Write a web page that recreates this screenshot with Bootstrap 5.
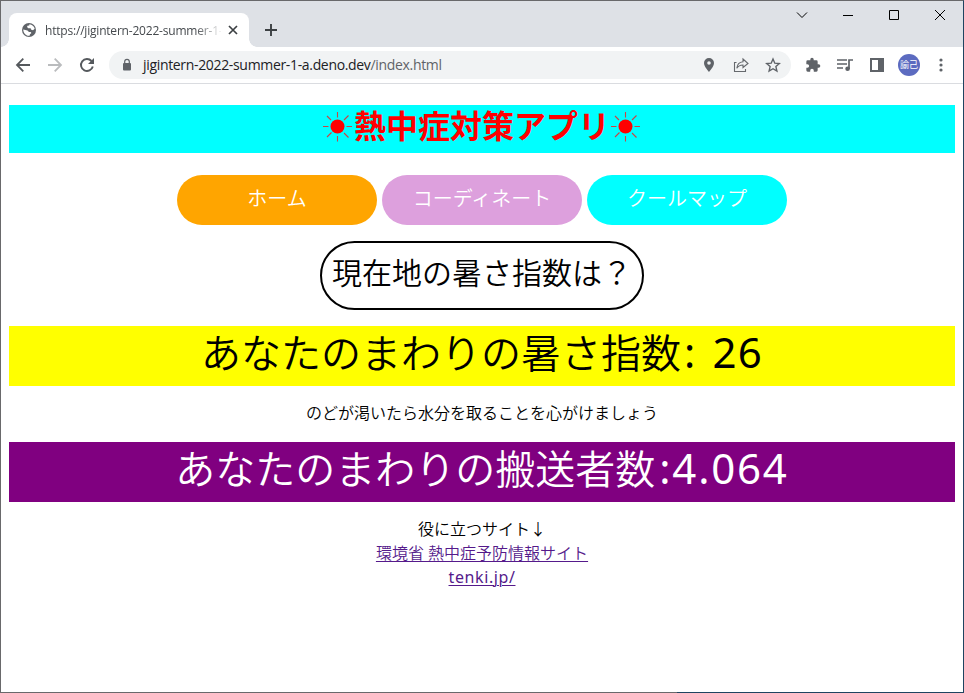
<!DOCTYPE html>
<html lang="ja">
<head>
<meta charset="utf-8">
<meta name="viewport" content="width=device-width, initial-scale=1">
<title>熱中症対策アプリ</title>
<link href="https://cdn.jsdelivr.net/npm/bootstrap@5.3.0/dist/css/bootstrap.min.css" rel="stylesheet">
<style>
body{font-family:"Noto Sans","Noto Sans CJK JP",sans-serif;color:#000;background:#fff;line-height:1.5}
.window-frame{width:964px;height:693px;border:1px solid #69696b;border-right-color:#1f4460;border-bottom:0}
.window-edge{height:1px;background:linear-gradient(to right,#69696b 676px,#1f4460 676px)}
.titlebar{height:46px;background:#dee1e6}
.browser-tab{width:240px;height:34px;margin:12px 0 0 8px;background:#fff;border-radius:8px 8px 0 0;padding-left:12px;font:12px/34px "Open Sans",sans-serif;color:#45494d;position:relative}
.browser-tab::before,.browser-tab::after{content:"";position:absolute;bottom:0;width:8px;height:8px}
.browser-tab::before{left:-8px;background:radial-gradient(circle at 0 0,transparent 7.5px,#fff 8px)}
.browser-tab::after{right:-8px;background:radial-gradient(circle at 100% 0,transparent 7.5px,#fff 8px)}
.tab-title{width:176px;margin-left:8px;padding-top:1px;letter-spacing:-.2px;-webkit-mask-image:linear-gradient(to right,#000 150px,transparent 178px);mask-image:linear-gradient(to right,#000 150px,transparent 178px)}
.new-tab{width:16px;margin:21px 0 0 14px}
.win-btn{width:46px;height:28px}
.toolbar{height:37px;padding:0 6px;border-bottom:1px solid #dadce0}
.tool{width:32px;height:28px}
.address{height:28px;margin:0 6px;background:#f1f3f4;border-radius:14px;font:14px/28px "Open Sans",sans-serif;color:#202124;padding:0 2px}
.address .url{letter-spacing:-.33px}
.url-path{color:#5f6368}
.avatar{width:22px;height:22px;border-radius:50%;background:#5c6bc0;color:#fff;font:9px/22px "Noto Sans CJK JP",sans-serif}
svg{display:block}
.site{padding:21px 8px 0;font-weight:350}
.app-title{height:48px;background:#0ff;color:red;font-size:32px;line-height:42px;font-weight:700;margin-bottom:22px}
.sun-icon{margin-top:6px}
.menu-row{gap:5px;margin-bottom:16px}
.menu-btn{width:200px;height:50px;border-radius:25px;color:#fff;font-size:20px;line-height:48px;padding:0 0 2px;border:0;font-weight:350}
.menu-btn:hover{color:#fff}
.c-home{background:orange}.c-coord{background:plum}.c-map{background:#0ff}
.question{height:69px;border:2px solid #000;border-radius:35px;font-size:30px;line-height:60px;padding:0 10px;margin-bottom:16px}
.banner{height:60px;font-size:40px;line-height:52px}
.b-index{background:#ff0;margin-bottom:15px}
.b-carry{background:purple;color:#fff;margin-bottom:15px}
.num{font-size:42px;font-weight:400;letter-spacing:1.2px;word-spacing:4px;margin-left:3px}
.b-carry .num{letter-spacing:1.8px;margin-left:4px}
.advice{height:24px;margin-bottom:17px}
.site a{color:#551a8b;text-underline-offset:2px;text-decoration-thickness:1px}
.latin{letter-spacing:.6px;font-weight:400}
</style>
<script src="https://cdn.jsdelivr.net/npm/bootstrap@5.3.0/dist/js/bootstrap.bundle.min.js"></script>
</head>
<body class="overflow-hidden">
<svg width="0" height="0" class="position-absolute"><defs>
<symbol id="sun" viewBox="0 0 32 32"><circle cx="15.500" cy="15.500" r="7" fill="red"/><path d="M15.500 1v5.500M15.500 25v5.500M1 15.500h5.500M24.500 15.500H30M5 5l4 4M22 22l4.500 4.500M26.500 4.500L22 9M9.500 21.500L5 26" stroke="#c44" stroke-width="1.100"/></symbol>
</defs></svg>
<div class="window-frame d-flex flex-column">
  <div class="titlebar d-flex align-items-start">
    <div class="browser-tab d-flex align-items-center">
      <svg width="16" height="16" viewBox="0 0 16 16"><circle cx="8" cy="8" r="7" fill="#5f6368"/><path d="M8.500 2.200c2.500.2 4.700 2 5.200 4.600l-1.700 1.400-1.700-.4-.7-1.600H7.200L6.100 5.100l.3-1.300 1.800-.2zM2.200 7.500l4.300 1.100 1.500 1.300 1.700.2.700 1-1.400 1.200-.5 1.500c-3.200.2-6-2.200-6.300-6.300z" fill="#fff"/></svg>
      <div class="tab-title text-nowrap">https://jigintern-2022-summer-1-</div>
      <svg class="ms-1" width="16" height="16" viewBox="0 0 16 16"><path d="M4 4l8 8M12 4l-8 8" stroke="#3c4043" stroke-width="1.700"/></svg>
    </div>
    <div class="new-tab"><svg width="16" height="16" viewBox="0 0 16 16"><path d="M8 2v12M2 8h12" stroke="#3c4043" stroke-width="1.900"/></svg></div>
    <div class="ms-auto d-flex">
      <div class="win-btn d-flex align-items-center justify-content-center"><svg width="12" height="12" viewBox="0 0 12 12"><path d="M1 3.500l5 5 5-5" fill="none" stroke="#000"/></svg></div>
      <div class="win-btn d-flex align-items-center justify-content-center"><svg width="12" height="12" viewBox="0 0 12 12"><path d="M1 6.500h10" stroke="#000"/></svg></div>
      <div class="win-btn d-flex align-items-center justify-content-center"><svg width="12" height="12" viewBox="0 0 12 12"><path d="M1.500 1.500h9v9h-9z" fill="none" stroke="#000"/></svg></div>
      <div class="win-btn d-flex align-items-center justify-content-center"><svg width="12" height="12" viewBox="0 0 12 12"><path d="M1 1l10 10M11 1L1 11" stroke="#000"/></svg></div>
    </div>
  </div>
  <div class="toolbar d-flex align-items-center">
    <div class="tool d-flex align-items-center justify-content-center"><svg width="16" height="16" viewBox="0 0 16 16"><path d="M15 8H2.500M8.300 1.700L2 8l6.300 6.300" fill="none" stroke="#55595d" stroke-width="1.800"/></svg></div>
    <div class="tool d-flex align-items-center justify-content-center"><svg width="16" height="16" viewBox="0 0 16 16"><path d="M1 8h12.500M7.700 1.700L14 8l-6.300 6.300" fill="none" stroke="#babcbe" stroke-width="1.800"/></svg></div>
    <div class="tool d-flex align-items-center justify-content-center"><svg width="16" height="16" viewBox="0 0 16 16"><path d="M13.800 9.500A6 6 0 1 1 12.500 4" fill="none" stroke="#55595d" stroke-width="1.900"/><path d="M15 1v6H9z" fill="#55595d"/></svg></div>
    <div class="address d-flex align-items-center flex-grow-1">
      <div class="tool d-flex align-items-center justify-content-center"><svg width="12" height="14" viewBox="0 0 12 14"><rect x="2" y="5" width="8" height="7.500" rx="1" fill="#5f6368"/><path d="M3.700 5.500V3.600a2.300 2.300 0 0 1 4.600 0v1.900" fill="none" stroke="#5f6368" stroke-width="1.200"/></svg></div>
      <div class="url text-nowrap">jigintern-2022-summer-1-a.deno.dev<span class="url-path">/index.html</span></div>
      <div class="tool ms-auto d-flex align-items-center justify-content-center"><svg width="16" height="16" viewBox="0 0 16 16"><path fill-rule="evenodd" d="M8 1a5 5 0 0 0-5 5c0 3.600 5 9 5 9s5-5.400 5-9a5 5 0 0 0-5-5zm0 3.200a1.800 1.800 0 1 1 0 3.600 1.800 1.800 0 0 1 0-3.600z" fill="#5f6368"/></svg></div>
      <div class="tool d-flex align-items-center justify-content-center"><svg width="16" height="16" viewBox="0 0 16 16"><path d="M3.500 5.500h-2v9h11V12M10 2l5 4.500-5 4V8C7 8 5.200 8.900 3.800 11.300 4.200 7.500 6.500 5.200 10 4.800z" fill="none" stroke="#66696d" stroke-width="1.100"/></svg></div>
      <div class="tool d-flex align-items-center justify-content-center"><svg width="16" height="16" viewBox="0 0 16 16"><path d="M8 2l1.800 4.200 4.500.4-3.400 3 1 4.400L8 11.700 4.100 14l1-4.400-3.400-3 4.500-.4z" fill="none" stroke="#5f6368" stroke-width="1.400"/></svg></div>
    </div>
    <div class="tool d-flex align-items-center justify-content-center"><svg width="16" height="16" viewBox="0 0 24 24"><path d="M20.500 11H19V7a2 2 0 0 0-2-2h-4V3.500a2.500 2.500 0 0 0-5 0V5H4a2 2 0 0 0-2 2v3.800h1.500a2.700 2.700 0 0 1 0 5.400H2V20a2 2 0 0 0 2 2h3.800v-1.500a2.700 2.700 0 0 1 5.400 0V22H17a2 2 0 0 0 2-2v-4h1.500a2.500 2.500 0 0 0 0-5z" fill="#5f6368"/></svg></div>
    <div class="tool d-flex align-items-center justify-content-center"><svg width="16" height="16" viewBox="0 0 16 16"><path d="M0 3h10M0 7h10M0 11h6M12 12V3h4" fill="none" stroke="#5f6368" stroke-width="1.700"/><circle cx="10.600" cy="11.800" r="2.300" fill="#5f6368"/></svg></div>
    <div class="tool d-flex align-items-center justify-content-center"><svg width="16" height="16" viewBox="0 0 16 16"><path fill-rule="evenodd" d="M1 1h14v14H1zM3 3v10h6V3z" fill="#5f6368"/></svg></div>
    <div class="tool d-flex align-items-center justify-content-center"><div class="avatar text-center text-nowrap">諭己</div></div>
    <div class="tool d-flex align-items-center justify-content-center"><svg width="16" height="16" viewBox="0 0 16 16" fill="#5f6368"><circle cx="8" cy="3" r="1.600"/><circle cx="8" cy="8" r="1.600"/><circle cx="8" cy="13" r="1.600"/></svg></div>
  </div>
  <main class="site flex-grow-1 text-center">
    <h1 class="app-title d-flex justify-content-center"><svg class="sun-icon" width="32" height="32"><use href="#sun" width="32" height="32"/></svg><span>熱中症対策アプリ</span><svg class="sun-icon" width="32" height="32"><use href="#sun" width="32" height="32"/></svg></h1>
    <nav class="menu-row d-flex justify-content-center">
      <button class="btn menu-btn c-home">ホーム</button>
      <button class="btn menu-btn c-coord">コーディネート</button>
      <button class="btn menu-btn c-map">クールマップ</button>
    </nav>
    <div class="d-flex justify-content-center"><div class="question">現在地の暑さ指数は？</div></div>
    <div class="banner b-index">あなたのまわりの暑さ指数<span class="num">: 26</span></div>
    <p class="advice">のどが渇いたら水分を取ることを心がけましょう</p>
    <div class="banner b-carry">あなたのまわりの搬送者数<span class="num">:4.064</span></div>
    <div>役に立つサイト↓</div>
    <div><a href="#">環境省 熱中症予防情報サイト</a></div>
    <div><a class="latin" href="#">tenki.jp/</a></div>
  </main>
  <div class="window-edge"></div>
</div>
</body>
</html>
